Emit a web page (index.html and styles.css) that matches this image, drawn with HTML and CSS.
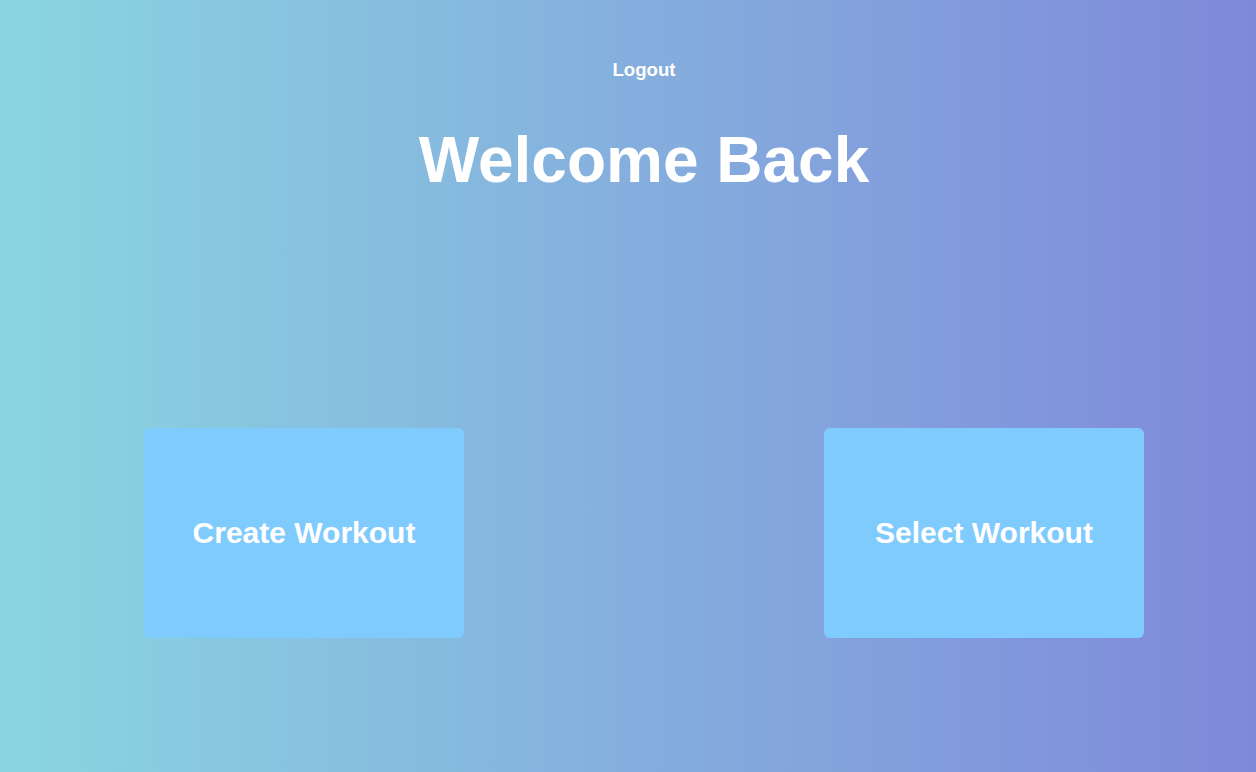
FILE: index.html
```html
<!DOCTYPE html>
<html lang="en">
<head>
<meta charset="utf-8">
<title>Welcome Back</title>
<link rel="stylesheet" href="styles.css">
</head>
<body>
  <div class="page">
    <nav class="topnav">
      <a class="logout" href="#">Logout</a>
    </nav>
    <h1 class="title">Welcome Back</h1>
    <section class="actions">
      <a class="action-card" href="#">Create Workout</a>
      <a class="action-card" href="#">Select Workout</a>
    </section>
  </div>
</body>
</html>
```

FILE: styles.css
```css
html, body {
  margin: 0;
  padding: 0;
}

body {
  min-height: 100vh;
  background: linear-gradient(to right, #8ad5e1, #7f89da);
  font-family: "Liberation Sans", Arial, sans-serif;
  color: #ffffff;
}

.page {
  padding-left: 32px;
  display: flex;
  flex-direction: column;
}

.topnav {
  display: flex;
  justify-content: center;
  padding-top: 60px;
}

.logout {
  color: #ffffff;
  text-decoration: none;
  font-weight: bold;
  font-size: 18.6px;
  line-height: 20px;
}

.title {
  margin: 48px 0 0;
  text-align: center;
  font-size: 64px;
  line-height: 64px;
  font-weight: bold;
}

.actions {
  display: flex;
  justify-content: space-between;
  padding: 0 112px;
  margin-top: 236px;
}

.action-card {
  width: 320px;
  height: 210px;
  border-radius: 6px;
  background: #80cbfd;
  display: flex;
  align-items: center;
  justify-content: center;
  color: #ffffff;
  text-decoration: none;
  font-weight: bold;
  font-size: 30px;
  line-height: 34px;
}
```
